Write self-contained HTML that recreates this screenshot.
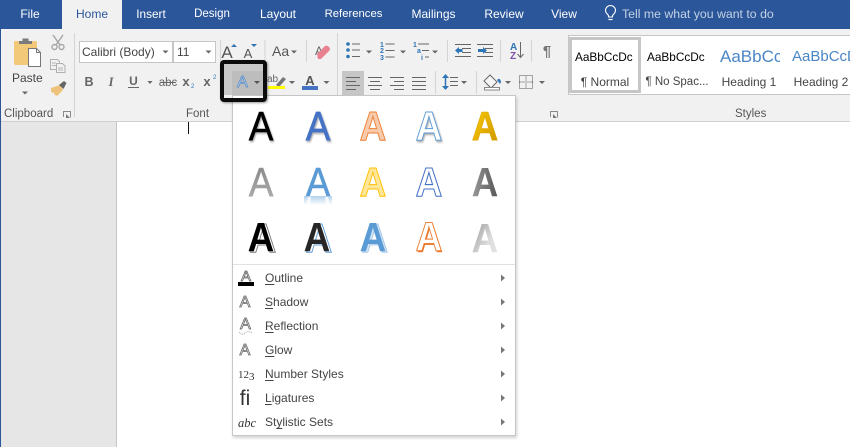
<!DOCTYPE html>
<html>
<head>
<meta charset="utf-8">
<style>
html,body{margin:0;padding:0;width:850px;height:447px;overflow:hidden;background:#fff;font-family:"Liberation Sans",sans-serif;}
.t{position:absolute;white-space:nowrap;line-height:14px;font-size:12px;}
.tab{color:#fff;top:7px;transform:translateX(-50%);}
.lab{color:#555;top:107px;font-size:11.5px;}
.mi{color:#444;left:265px;font-size:12px;}
.st{color:#444;top:75px;font-size:12px;transform:translateX(-50%);}
.sw{position:absolute;overflow:hidden;white-space:nowrap;line-height:20px;}
u{text-decoration-thickness:1px;text-underline-offset:2px;}
svg{position:absolute;left:0;top:0;}
.big{font-family:"Liberation Sans",sans-serif;font-size:41px;text-anchor:middle;}
.b{font-weight:bold;}
</style>
</head>
<body>
<!-- backgrounds -->
<div style="position:absolute;left:0;top:0;width:850px;height:29px;background:#2b579a"></div>
<div style="position:absolute;left:62px;top:0;width:60px;height:29px;background:#f1f1f1"></div>
<div style="position:absolute;left:0;top:29px;width:850px;height:92px;background:#f1f1f1;border-bottom:1px solid #d0d0d0"></div>
<div style="position:absolute;left:0;top:29px;width:1px;height:418px;background:#2b579a"></div>
<div style="position:absolute;left:1px;top:122px;width:115px;height:325px;background:#e6e6e6;border-right:1px solid #c6c6c6"></div>
<div style="position:absolute;left:188px;top:122px;width:1px;height:12px;background:#111"></div>

<!-- tabs -->
<div class="t tab" style="left:30px">File</div>
<div class="t tab" style="left:92px;color:#2b579a">Home</div>
<div class="t tab" style="left:151px;font-size:11.8px">Insert</div>
<div class="t tab" style="left:212px;font-size:11.5px">Design</div>
<div class="t tab" style="left:278px">Layout</div>
<div class="t tab" style="left:353.500px;font-size:11.3px">References</div>
<div class="t tab" style="left:433.500px">Mailings</div>
<div class="t tab" style="left:504px">Review</div>
<div class="t tab" style="left:564px">View</div>
<div class="t" style="left:622px;top:7px;color:#c4d0e4;font-size:12.3px">Tell me what you want to do</div>

<!-- font boxes -->
<div style="position:absolute;left:79px;top:41px;height:20px;background:#fff;border:1px solid #c6c6c6;width:92px"></div>
<div style="position:absolute;left:173px;top:41px;width:41px;height:20px;background:#fff;border:1px solid #c6c6c6"></div>
<div class="t" style="left:82px;top:45px;color:#444">Calibri (Body)</div>
<div class="t" style="left:177px;top:45px;color:#444">11</div>

<!-- styles gallery -->
<div style="position:absolute;left:568px;top:35px;width:282px;height:58px;background:#fff;border:1px solid #c6c6c6;border-right:0"></div>
<div style="position:absolute;left:569px;top:37px;width:66px;height:50px;border:3px solid #c6c6c6;background:#fff"></div>
<div class="sw" style="left:575px;top:47px;width:59px;font-size:11.8px;color:#000;">AaBbCcDc</div>
<div class="sw" style="left:647px;top:47px;width:60px;font-size:11.8px;color:#000;">AaBbCcDc</div>
<div class="sw" style="left:720px;top:47px;width:60px;font-size:17px;color:#4a86c5;">AaBbCc</div>
<div class="sw" style="left:792px;top:47px;width:58px;font-size:15px;color:#4a86c5;">AaBbCcD</div>
<div class="t st" style="left:605px">¶ Normal</div>
<div class="t st" style="left:677px;font-size:11.5px">¶ No Spac...</div>
<div class="t st" style="left:749px">Heading 1</div>
<div class="t st" style="left:821px">Heading 2</div>

<!-- ribbon text -->
<div class="t" style="left:12px;top:71px;color:#444">Paste</div>
<div class="t lab" style="left:4px">Clipboard</div>
<div class="t lab" style="left:186px">Font</div>
<div class="t lab" style="left:735px">Styles</div>

<!-- ribbon icons -->
<svg width="850" height="447" viewBox="0 0 850 447">
<defs>
<linearGradient id="gry" x1="0" y1="0" x2="0" y2="1"><stop offset="0" stop-color="#808080"/><stop offset="1" stop-color="#b5b5b5"/></linearGradient>
<linearGradient id="gld" x1="0" y1="0" x2="1" y2="1"><stop offset="0" stop-color="#ffd000"/><stop offset="1" stop-color="#c99000"/></linearGradient>
<linearGradient id="dgr" x1="0" y1="0" x2="1" y2="0"><stop offset="0" stop-color="#9a9a9a"/><stop offset="1" stop-color="#555"/></linearGradient>
<linearGradient id="lgr" x1="0" y1="0" x2="1" y2="1"><stop offset="0" stop-color="#8f8f8f"/><stop offset=".6" stop-color="#dcdcdc"/><stop offset="1" stop-color="#e8e8e8"/></linearGradient>
<linearGradient id="rfl" x1="0" y1="0" x2="0" y2="1"><stop offset="0" stop-color="#a9cbe9"/><stop offset="1" stop-color="#fff"/></linearGradient>
<filter id="sh" x="-30%" y="-30%" width="160%" height="160%"><feDropShadow dx="1" dy="1.5" stdDeviation="1" flood-color="#000" flood-opacity=".35"/></filter>
</defs>

<!-- bulb -->
<path d="M608.500 17v-1.500c-1-1.500-3-2.500-3-5a5 5 0 0 1 10 0c0 2.500-2 3.500-3 5V17z" fill="none" stroke="#fff" stroke-width="1.100"/>
<path d="M608.500 19.500h4" stroke="#fff" stroke-width="1.200"/>

<!-- separators -->
<g stroke="#d4d4d4" stroke-width="1">
<path d="M74.500 33v84M337.500 33v84M306.500 40v22M447.500 40v22M500.500 40v22M531.500 40v22M435.500 71v23M476.500 71v23M220.500 40v22M265 40v22"/>
</g>

<!-- paste -->
<rect x="14" y="41" width="23" height="24" rx="1.500" fill="#f2c879"/>
<path d="M19 44v-3h3.500v-2.500h6V41H32v3z" fill="#7a7a7a"/>
<path d="M28.500 48.500h8l4 4v14h-12z" fill="#fff" stroke="#777"/>
<path d="M36.500 48.500v4h4" fill="none" stroke="#777"/>
<path d="M22 91.500h6l-3 3z" fill="#666"/>
<!-- scissors -->
<path d="M53 35l7 10M63 35l-7 10" stroke="#a6a6a6" stroke-width="1.500" fill="none"/>
<circle cx="54.500" cy="47" r="2.500" fill="none" stroke="#a6a6a6" stroke-width="1.400"/>
<circle cx="61.500" cy="47" r="2.500" fill="none" stroke="#a6a6a6" stroke-width="1.400"/>
<!-- copy -->
<path d="M50.500 59.500h7l2 2v8h-9z" fill="#f1f1f1" stroke="#b0b0b0"/>
<path d="M56.500 63.500h6l2.500 2.500v6.500h-8.500z" fill="#f1f1f1" stroke="#b0b0b0"/>
<path d="M52 63h4M52 65.500h4M58 68h5M58 70h5" stroke="#b8b8b8"/>
<!-- format painter -->
<path d="M51 88l9-3 3 5-6 6-2-1-1-2-3-1z" fill="#eec27a"/>
<path d="M59 85l5-4 2.500 2-3 6z" fill="#666"/>

<!-- launchers -->
<g fill="none" stroke="#8a8a8a"><path d="M63.500 117v-5.500h7v6"/><path d="M550.500 117v-5.500h7v6"/></g>
<path d="M66 114l4 4h-4z" fill="#777"/><path d="M553 114l4 4h-4z" fill="#777"/>

<!-- dropdown arrows -->
<g fill="#666">
<path d="M162.500 50.500h6l-3 3z"/><path d="M205.500 50.500h6l-3 3z"/>
<path d="M291 50.500h6l-3 3z"/><path d="M366 50.500h6l-3 3z"/><path d="M400 50.500h6l-3 3z"/><path d="M432 50.500h6l-3 3z"/>
<path d="M147.500 81h5l-2.500 3z"/><path d="M289 81h6l-3 3z"/><path d="M323.500 81h6l-3 3z"/>
<path d="M461 81h6l-3 3z"/><path d="M505 81h6l-3 3z"/><path d="M539 81h6l-3 3z"/>
</g>

<!-- grow / shrink font -->
<text x="227" y="58" font-size="17" text-anchor="middle" fill="#555" font-family="Liberation Sans">A</text>
<path d="M231 47l3-3 3 3z" fill="#2e75b6"/>
<text x="248" y="58" font-size="13" text-anchor="middle" fill="#555" font-family="Liberation Sans">A</text>
<path d="M251 44h6l-3 3z" fill="#2e75b6"/>
<text x="272" y="56" font-size="14" fill="#555" font-family="Liberation Sans">Aa</text>

<!-- clear formatting -->
<text x="315" y="55" font-size="12" fill="#666" font-family="Liberation Sans">A</text>
<path d="M317 54l8-8q2-1 4 1q2 2 0 4l-8 8h-3z" fill="#e8808f"/>

<!-- bullets -->
<g fill="#2e75b6"><circle cx="348" cy="44" r="1.800"/><circle cx="348" cy="50" r="1.800"/><circle cx="348" cy="56.500" r="1.800"/></g>
<path d="M352 44h8M352 50h8M352 56.500h8" stroke="#666" fill="none"/>
<!-- numbered -->
<g fill="#2e75b6" font-size="7" font-weight="bold" font-family="Liberation Sans"><text x="380" y="47">1</text><text x="380" y="53">2</text><text x="380" y="60">3</text></g>
<path d="M385.500 44h9M385.500 50.500h9M385.500 57h9" stroke="#666" fill="none"/>
<!-- multilevel -->
<g fill="#2e75b6" font-size="7" font-weight="bold" font-family="Liberation Sans"><text x="413" y="47">1</text><text x="417" y="53">a</text><text x="421" y="60">i</text></g>
<path d="M418 44h11M422 50.500h7M425 57h4" stroke="#666" fill="none"/>
<!-- indent -->
<path d="M455 44.500h16M462 48.500h9M462 52.500h9M455 56.500h16" stroke="#666" fill="none"/>
<path d="M455 50.500l4-3.500v2h3.500v3H459v2z" fill="#2e75b6"/>
<path d="M477 44.500h16M485 48.500h8M485 52.500h8M477 56.500h16" stroke="#666" fill="none"/>
<path d="M487 50.500l-4-3.500v2h-5v3h5v2z" fill="#2e75b6"/>
<!-- sort -->
<text x="510" y="50" font-size="10" font-weight="bold" fill="#2e75b6" font-family="Liberation Sans">A</text>
<text x="510" y="59" font-size="10" font-weight="bold" fill="#7d4fa8" font-family="Liberation Sans">Z</text>
<path d="M520.500 42v15M517.500 54l3 3.500 3-3.500" stroke="#666" fill="none"/>
<!-- pilcrow -->
<text x="547" y="56" font-size="15" font-weight="bold" text-anchor="middle" fill="#777" font-family="Liberation Sans">¶</text>

<!-- row2 format -->
<g fill="#666" font-family="Liberation Sans">
<text x="89" y="86" font-size="12.500" font-weight="bold" text-anchor="middle">B</text>
<text x="111" y="86" font-size="12.500" font-style="italic" font-family="Liberation Serif" font-weight="bold" text-anchor="middle">I</text>
<text x="133.500" y="85" font-size="12" font-weight="bold" text-anchor="middle">U</text>
<text x="168" y="86" font-size="11.500" text-anchor="middle">abc</text>
<text x="186" y="86" font-size="13" font-weight="bold" text-anchor="middle">x</text>
<text x="207" y="86" font-size="13" font-weight="bold" text-anchor="middle">x</text>
</g>
<path d="M128 87.500h11" stroke="#666"/>
<path d="M160 82.500h16" stroke="#666"/>
<text x="191" y="88" font-size="6" fill="#2e75b6" font-family="Liberation Sans">2</text>
<text x="213" y="79" font-size="6" fill="#2e75b6" font-family="Liberation Sans">2</text>

<!-- highlight -->
<text x="267" y="82" font-size="10" fill="#666" font-family="Liberation Sans">ab</text>
<path d="M276 85l7-8 3 2-7 8z" fill="#777"/>
<rect x="268" y="86" width="17" height="3" fill="#ffff00"/>
<!-- font color -->
<text x="310" y="85" font-size="13" font-weight="bold" text-anchor="middle" fill="#555" font-family="Liberation Sans">A</text>
<rect x="302" y="86" width="16" height="4" fill="#4472c4"/>

<!-- alignment -->
<rect x="342" y="71" width="22" height="24" fill="#c6c6c6"/>
<g stroke="#666" fill="none">
<path d="M346 77.500h14M346 81.500h10M346 85.500h14M346 89.500h10"/>
<path d="M368 77.500h14M370 81.500h10M368 85.500h14M370 89.500h10"/>
<path d="M390 77.500h14M394 81.500h10M390 85.500h14M394 89.500h10"/>
<path d="M412 77.500h14M412 81.500h14M412 85.500h14M412 89.500h14"/>
</g>
<!-- line spacing -->
<path d="M445.500 75v14" stroke="#2e75b6" stroke-width="1.500"/>
<path d="M442 78l3.500-4 3.500 4zM442 86l3.500 4 3.500-4z" fill="#2e75b6"/>
<path d="M450 77.500h8M450 81.500h8M450 85.500h8" stroke="#666"/>
<!-- shading -->
<path d="M490 75l7 7-6 6-7-7z" fill="#f6f6f6" stroke="#666"/>
<path d="M497 80q3-3 4 2l-1 2z" fill="#2e75b6"/>
<rect x="484.500" y="87.500" width="15" height="2.500" fill="#fff" stroke="#888"/>
<!-- borders -->
<path d="M519.500 75.500h13v13h-13zM526 75.500v13M519.500 82h13" fill="none" stroke="#555" stroke-dasharray="1 1"/>
<!-- text effects highlight + black box -->
<rect x="224" y="64" width="40" height="31" fill="#c9c9c9"/>
<rect x="232" y="71" width="32" height="24" fill="#bdbdbd"/>
<text x="242.500" y="87" font-size="16" text-anchor="middle" fill="#cfdff0" stroke="#5b8fc9" stroke-width=".8" font-family="Liberation Sans">A</text>
<path d="M254 81h6l-3 3z" fill="#555"/>
</svg>

<!-- menu -->
<div style="position:absolute;left:232px;top:95px;width:284px;height:341px;background:#fff;border:1px solid #c6c6c6;box-sizing:border-box;box-shadow:1px 2px 3px rgba(0,0,0,.18)"></div>
<div style="position:absolute;left:233px;top:264px;width:282px;height:1px;background:#e1e1e1"></div>
<div style="position:absolute;left:220px;top:60px;width:47px;height:42px;box-sizing:border-box;border:4px solid #0c0c0c;border-radius:4px;box-shadow:1px 1px 2px rgba(0,0,0,.4)"></div>

<div class="t mi" style="top:271px"><u>O</u>utline</div>
<div class="t mi" style="top:295px"><u>S</u>hadow</div>
<div class="t mi" style="top:319px"><u>R</u>eflection</div>
<div class="t mi" style="top:343px"><u>G</u>low</div>
<div class="t mi" style="top:367px"><u>N</u>umber Styles</div>
<div class="t mi" style="top:391px"><u>L</u>igatures</div>
<div class="t mi" style="top:415px">St<u>y</u>listic Sets</div>

<svg width="850" height="447" viewBox="0 0 850 447">
<!-- row 1 -->
<g transform="translate(261 140) scale(.9 1)"><text class="big" fill="#000" stroke="#000" stroke-width=".5" filter="url(#sh)">A</text></g>
<g transform="translate(318 140) scale(.9 1)"><text class="big" fill="#4472c4" stroke="#4472c4" stroke-width=".7" filter="url(#sh)">A</text></g>
<g transform="translate(373 140) scale(.9 1)"><text class="big b" fill="#f7caac" stroke="#ed7d31" stroke-width="1">A</text></g>
<g transform="translate(429 140) scale(.9 1)"><text class="big b" fill="#fff" stroke="#5b9bd5" stroke-width="1" filter="url(#sh)">A</text></g>
<g transform="translate(485 140) scale(.9 1)"><text class="big b" fill="url(#gld)" stroke="#e0a800" stroke-width=".6">A</text></g>
<!-- row 2 -->
<g transform="translate(261 196) scale(.9 1)"><text class="big" fill="url(#gry)" stroke="#a0a0a0" stroke-width=".5">A</text></g>
<g transform="translate(318 196) scale(.9 1)"><text class="big" fill="#5b9bd5" stroke="#5b9bd5" stroke-width=".5">A</text></g>
<rect x="304" y="196" width="28" height="9" fill="url(#rfl)" opacity=".9"/>
<path d="M306 205l2-8h3l-1 8zM330 205l-2-8h-3l1 8z" fill="#fff" opacity=".8"/>
<g transform="translate(373 196) scale(.9 1)"><text class="big b" fill="#ffe699" stroke="#ffc000" stroke-width="1">A</text></g>
<g transform="translate(429 196) scale(.9 1)"><text class="big b" fill="#fff" stroke="#4472c4" stroke-width="1.100">A</text></g>
<g transform="translate(485 196) scale(.9 1)"><text class="big b" fill="url(#dgr)">A</text></g>
<!-- row 3 -->
<g transform="translate(263 252) scale(.9 1)"><text class="big b" fill="#fff" stroke="#777" stroke-width="1">A</text></g>
<g transform="translate(261 251) scale(.9 1)"><text class="big b" fill="#000">A</text></g>
<g transform="translate(319 252) scale(.9 1)"><text class="big b" fill="#fff" stroke="#5b9bd5" stroke-width="1">A</text></g>
<g transform="translate(317 251) scale(.9 1)"><text class="big b" fill="#262626">A</text></g>
<g transform="translate(375 252) scale(.9 1)"><text class="big b" fill="#cfe2f3" stroke="#9dc3e6" stroke-width=".8">A</text></g>
<g transform="translate(373 251) scale(.9 1)"><text class="big b" fill="#5b9bd5">A</text></g>
<g transform="translate(430 252) scale(.9 1)"><text class="big b" fill="#ed7d31">A</text></g>
<g transform="translate(429 250.500) scale(.9 1)"><text class="big b" fill="#fff" stroke="#ed7d31" stroke-width="1">A</text></g>
<g transform="translate(485 252) scale(.9 1)"><text class="big b" fill="url(#lgr)">A</text></g>

<!-- menu icons -->
<g font-family="Liberation Sans" font-size="16" text-anchor="middle" fill="#fff" stroke="#666" stroke-width=".8">
<text x="246" y="281" font-size="15">A</text>
<text x="245" y="307">A</text>
<text x="245.500" y="329">A</text>
<text x="245" y="355">A</text>
</g>
<rect x="238" y="282" width="16" height="4" fill="#000"/>
<path d="M239 332q3 4 6 1t7 0" fill="none" stroke="#aaa" stroke-dasharray="1 1"/>
<text x="238" y="378" font-size="11" font-family="Liberation Serif" fill="#333">12<tspan dy="2">3</tspan></text>
<text x="245" y="405" font-size="21" text-anchor="middle" font-family="Liberation Sans" fill="#333">fi</text>
<text x="238" y="427" font-size="12.500" font-style="italic" font-family="Liberation Serif" fill="#333">abc</text>

<!-- submenu arrows -->
<g fill="#777">
<path d="M501 274.500l4 3.500-4 3.500z"/><path d="M501 298.500l4 3.500-4 3.500z"/><path d="M501 322.500l4 3.500-4 3.500z"/><path d="M501 346.500l4 3.500-4 3.500z"/><path d="M501 370.500l4 3.500-4 3.500z"/><path d="M501 394.500l4 3.500-4 3.500z"/><path d="M501 418.500l4 3.500-4 3.500z"/>
</g>
</svg>
</body>
</html>
